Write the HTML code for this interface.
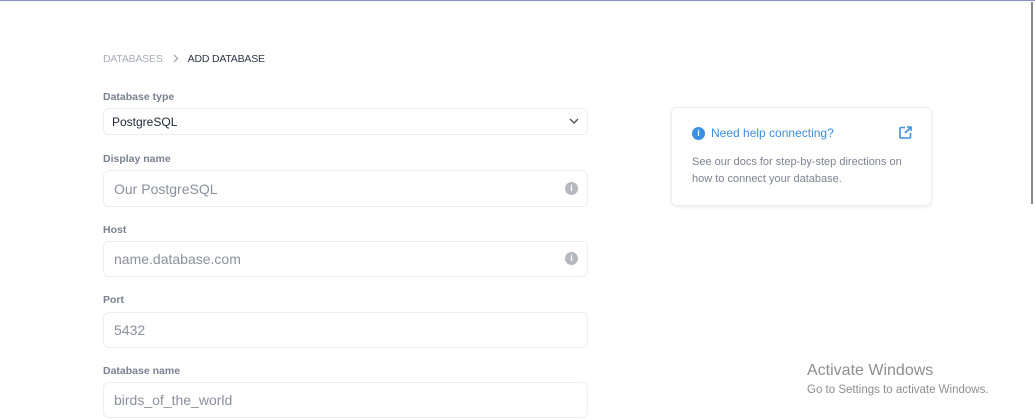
<!DOCTYPE html>
<html><head><style>
body{margin:0;width:1035px;height:420px;overflow:hidden;background:#fff;font-family:"Liberation Sans",sans-serif;position:relative}
.top{position:absolute;top:0;left:0;right:0;height:1px;background:#8a8fd0}
.sb{position:absolute;left:1031px;top:2px;width:2px;height:202px;background:#8a8a8a}
.crumb{position:absolute;left:103px;top:53px;font-size:10.5px;color:#a8adb8;letter-spacing:-0.2px}
.crumb b{font-weight:normal;color:#2e3548}
.lbl{position:absolute;left:103px;font-size:10.5px;font-weight:bold;color:#7a8190}
.inp{position:absolute;left:103px;width:485px;border:1px solid #eceef1;border-radius:6px;box-sizing:border-box;font-size:14px;color:#8a909c;padding-left:10px;display:flex;align-items:center}
.info{position:absolute;right:9px;top:50%;margin-top:-7px;width:13px;height:13px;border-radius:50%;background:#b5b8be;color:#fff;font-size:9px;font-weight:bold;text-align:center;line-height:13px}
.card{position:absolute;left:671px;top:107px;width:261px;height:99px;border:1px solid #eceef1;border-radius:6px;box-shadow:0 1px 3px rgba(0,0,0,.08);box-sizing:border-box}
.win{position:absolute;left:807px;color:#8e8e8e}
</style></head><body>
<div class="top"></div><div class="sb"></div>
<div class="crumb">DATABASES<svg style="margin:0 9px 0 10px;vertical-align:-1px" width="6" height="9" viewBox="0 0 6 9"><path d="M1 1l3.5 3.5L1 8" fill="none" stroke="#a8adb8" stroke-width="1.4"/></svg><b>ADD DATABASE</b></div>
<div class="lbl" style="top:91px">Database type</div>
<div class="inp" style="top:108px;height:27px;color:#1f2533;font-size:12px;padding-left:8px">PostgreSQL
<svg style="position:absolute;right:8px;top:9px" width="10" height="7" viewBox="0 0 10 7"><path d="M1 1l4 4 4-4" fill="none" stroke="#555" stroke-width="1.4"/></svg></div>
<div class="lbl" style="top:153px">Display name</div>
<div class="inp" style="top:170px;height:37px">Our PostgreSQL<span class="info">i</span></div>
<div class="lbl" style="top:224px">Host</div>
<div class="inp" style="top:241px;height:36px">name.database.com<span class="info">i</span></div>
<div class="lbl" style="top:294px">Port</div>
<div class="inp" style="top:312px;height:36px">5432</div>
<div class="lbl" style="top:365px">Database name</div>
<div class="inp" style="top:382px;height:36px">birds_of_the_world</div>
<div class="card">
<div style="position:absolute;left:20px;top:19px;width:13px;height:13px;border-radius:50%;background:#3a8fe0;color:#fff;font-size:9px;font-weight:bold;text-align:center;line-height:13px">i</div>
<div style="position:absolute;left:39px;top:18px;font-size:12px;color:#3a8fe0">Need help connecting?</div>
<svg style="position:absolute;left:227px;top:18px" width="13" height="13" viewBox="0 0 13 13"><path d="M6 1.5H2a1 1 0 0 0-1 1v8.5a1 1 0 0 0 1 1h8.5a1 1 0 0 0 1-1V7M8 1h4v4M12 1L6 7" fill="none" stroke="#3a8fe0" stroke-width="1.6"/></svg>
<div style="position:absolute;left:20px;top:46px;font-size:11px;line-height:17px;color:#7d8391;width:230px">See our docs for step-by-step directions on how to connect your database.</div>
</div>
<div class="win" style="top:362px;font-size:16px">Activate Windows</div>
<div class="win" style="top:384px;font-size:11.5px">Go to Settings to activate Windows.</div>
</body></html>
